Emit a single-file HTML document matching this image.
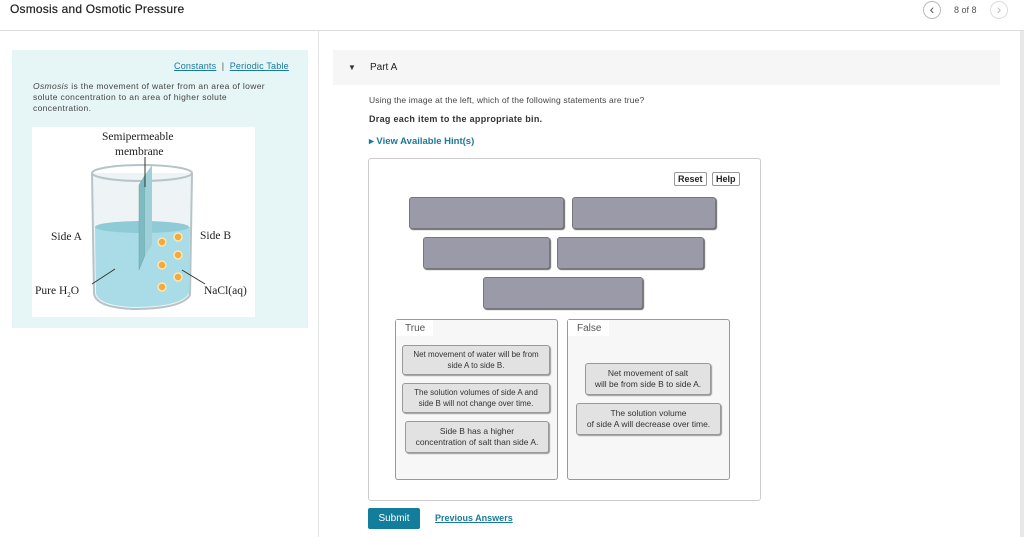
<!DOCTYPE html>
<html><head><style>
body{margin:0;width:1024px;height:537px;background:#fff;font-family:"Liberation Sans",sans-serif;position:relative;overflow:hidden;color:#333}
.a{position:absolute}
.slot{position:absolute;background:#9b9aa9;border:1px solid #777;border-radius:3px;box-shadow:1px 1px 1px #666}
.card{position:absolute;background:#e2e2e2;border:1px solid #999;border-radius:3px;box-shadow:1px 1px 1px #999;font-size:8px;text-align:center;line-height:11px;color:#333;display:flex;align-items:center;justify-content:center}
.bin{position:absolute;background:#f7f7f7;border:1px solid #999;border-radius:3px}
.bin span{position:absolute;left:0;top:0;background:#fff;padding:3px 8px 2px 9px;font-size:10px;color:#555}
.btn{position:absolute;background:#fff;border:1px solid #999;border-radius:2px;font-size:9px;font-weight:bold;padding:1px 3px;color:#222}
</style></head><body>
<div class="a" style="left:10px;top:2px;font-size:12px;color:#222;letter-spacing:.2px;-webkit-text-stroke:.2px #222">Osmosis and Osmotic Pressure</div>
<div class="a" style="left:923px;top:1px;width:16px;height:16px;border:1px solid #bbb;border-radius:50%;font-size:14px;text-align:center;line-height:14px;color:#555">&lsaquo;</div>
<div class="a" style="left:954px;top:5px;font-size:9px;color:#555">8 of 8</div>
<div class="a" style="left:990px;top:1px;width:16px;height:16px;border:1px solid #ddd;border-radius:50%;font-size:14px;text-align:center;line-height:14px;color:#bbb">&rsaquo;</div>
<div class="a" style="left:0;top:30px;width:1024px;height:1px;background:#ddd"></div>
<div class="a" style="left:318px;top:31px;width:1px;height:506px;background:#e3e3e3"></div>
<div class="a" style="left:1020px;top:31px;width:4px;height:506px;background:#e8e8e8"></div>

<div class="a" style="left:12px;top:50px;width:296px;height:278px;background:#e6f5f5"></div>
<div class="a" style="left:174px;top:61px;font-size:9px;color:#1a7a9a;letter-spacing:.2px"><u>Constants</u> <span style="color:#555">&nbsp;|&nbsp;</span> <u>Periodic Table</u></div>
<div class="a" style="left:33px;top:81px;width:250px;font-size:8.5px;line-height:11px;color:#444;letter-spacing:.35px"><i>Osmosis</i> is the movement of water from an area of lower solute concentration to an area of higher solute concentration.</div>
<div class="a" style="left:32px;top:127px;width:223px;height:190px;background:#fff"></div>
<svg class="a" style="left:32px;top:127px" width="223" height="190" viewBox="0 0 223 190">
<path d="M60 46 L62 166 Q63 180 100 182 Q150 182 158 168 L160 46" fill="#eef4f5" stroke="#b6c4c8" stroke-width="2"/>
<ellipse cx="110" cy="46" rx="50" ry="8" fill="none" stroke="#b6c4c8" stroke-width="2"/>
<path d="M63 100 Q110 92 158 100 L157 166 Q150 180 100 180 Q66 178 64 166Z" fill="#a9dce6"/>
<ellipse cx="110" cy="100" rx="47" ry="6" fill="#8ecbd6"/>
<path d="M107 58 L113 48 L113 128 L107 143Z" fill="#7fb9c2" stroke="#6aa" stroke-width=".5"/>
<path d="M113 48 L120 38 L120 118 L113 128Z" fill="#9fd0d8"/>
<line x1="113" y1="30" x2="113" y2="60" stroke="#333"/>
<g fill="#f2a940" stroke="#fce6b0" stroke-width="1.5"><circle cx="130" cy="115" r="4"/><circle cx="146" cy="110" r="4"/><circle cx="146" cy="128" r="4"/><circle cx="130" cy="138" r="4"/><circle cx="146" cy="150" r="4"/><circle cx="130" cy="160" r="4"/></g>
<line x1="60" y1="157" x2="83" y2="142" stroke="#333"/>
<line x1="150" y1="143" x2="173" y2="157" stroke="#333"/>
<g font-family="Liberation Serif,serif" font-size="11.5" fill="#222"><text x="70" y="13">Semipermeable</text><text x="83" y="28">membrane</text><text x="19" y="113">Side A</text><text x="168" y="112">Side B</text><text x="3" y="167">Pure H<tspan font-size="7" dy="3">2</tspan><tspan dy="-3">O</tspan></text><text x="172" y="167">NaCl(aq)</text></g>
</svg>

<div class="a" style="left:333px;top:50px;width:667px;height:35px;background:#f6f6f6"></div>
<div class="a" style="left:348px;top:63px;font-size:8px;color:#333">&#9660;</div>
<div class="a" style="left:370px;top:62px;font-size:10px;color:#222">Part A</div>
<div class="a" style="left:369px;top:95px;font-size:8.5px;color:#444;letter-spacing:.15px">Using the image at the left, which of the following statements are true?</div>
<div class="a" style="left:369px;top:114px;font-size:9px;font-weight:bold;color:#333;letter-spacing:.3px">Drag each item to the appropriate bin.</div>
<div class="a" style="left:369px;top:136px;font-size:9.5px;font-weight:bold;color:#1a7a9a">&#9656; View Available Hint(s)</div>

<div class="a" style="left:368px;top:158px;width:391px;height:341px;border:1px solid #ccc;border-radius:3px"></div>
<div class="btn" style="left:674px;top:172px">Reset</div>
<div class="btn" style="left:712px;top:172px">Help</div>
<div class="slot" style="left:409px;top:197px;width:153px;height:30px"></div>
<div class="slot" style="left:572px;top:197px;width:142px;height:30px"></div>
<div class="slot" style="left:423px;top:237px;width:125px;height:30px"></div>
<div class="slot" style="left:557px;top:237px;width:145px;height:30px"></div>
<div class="slot" style="left:483px;top:277px;width:158px;height:30px"></div>
<div class="bin" style="left:395px;top:319px;width:161px;height:159px"><span>True</span></div>
<div class="bin" style="left:567px;top:319px;width:161px;height:159px"><span>False</span></div>
<div class="card" style="left:402px;top:345px;width:146px;height:28px">Net movement of water will be from<br>side A to side B.</div>
<div class="card" style="left:402px;top:383px;width:146px;height:28px">The solution volumes of side A and<br>side B will not change over time.</div>
<div class="card" style="left:405px;top:421px;width:142px;height:30px;font-size:8.5px">Side B has a higher<br>concentration of salt than side A.</div>
<div class="card" style="left:585px;top:363px;width:124px;height:30px;font-size:8.5px">Net movement of salt<br>will be from side B to side A.</div>
<div class="card" style="left:576px;top:403px;width:143px;height:30px;font-size:8.5px">The solution volume<br>of side A will decrease over time.</div>

<div class="a" style="left:368px;top:508px;width:52px;height:21px;background:#137d9c;border-radius:2px;color:#fff;font-size:10px;text-align:center;line-height:21px">Submit</div>
<div class="a" style="left:435px;top:513px;font-size:9px;font-weight:bold;color:#1a7a9a;text-decoration:underline">Previous Answers</div>
</body></html>
